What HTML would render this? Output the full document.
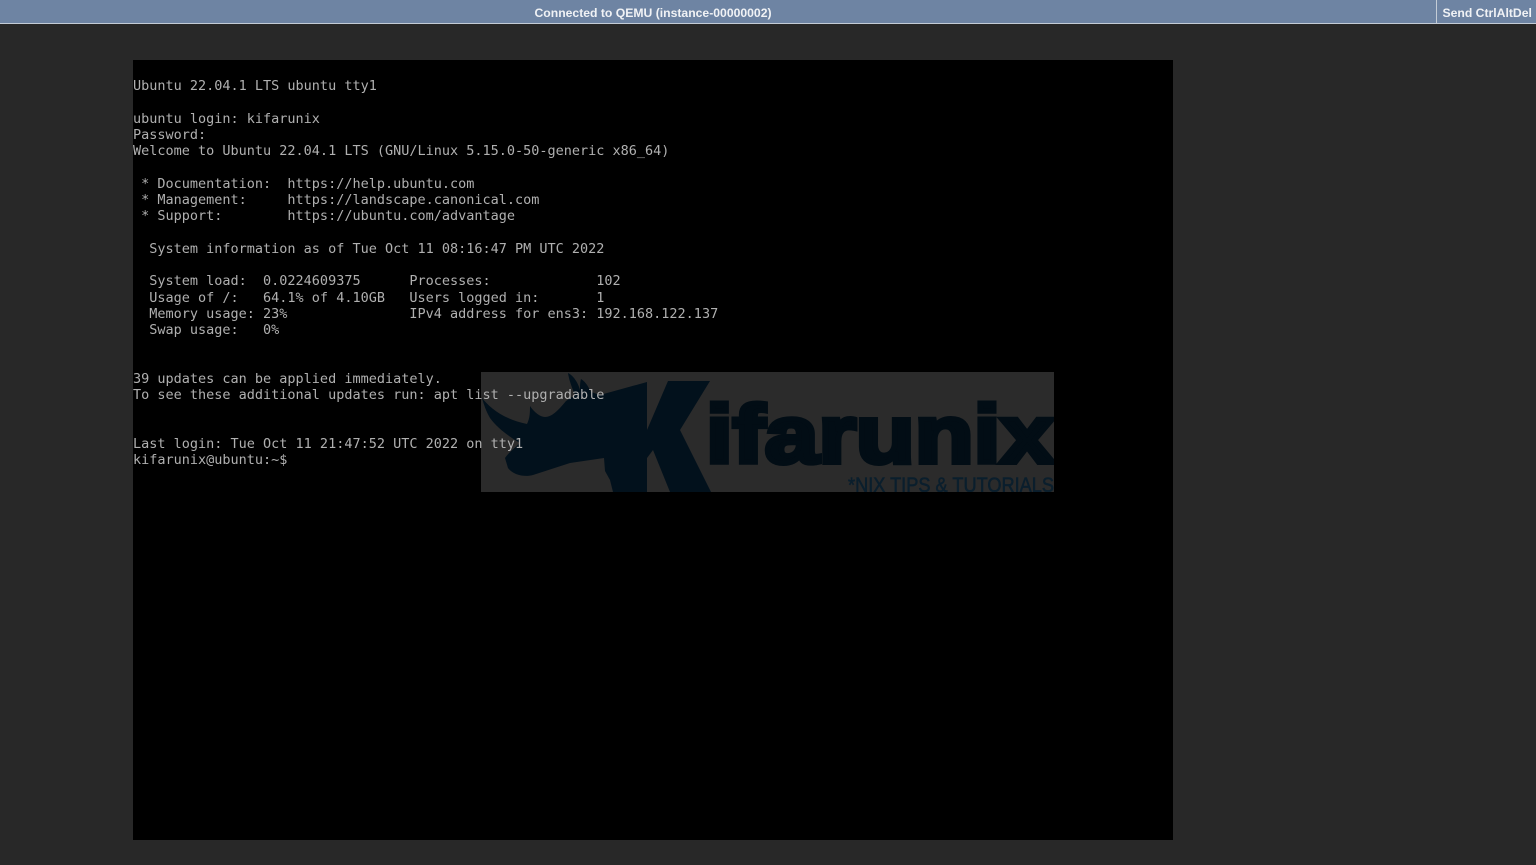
<!DOCTYPE html>
<html><head><meta charset="utf-8"><title>Console</title>
<style>
html,body{margin:0;padding:0;width:1536px;height:865px;overflow:hidden;background:#282828;}
#bar{position:absolute;left:0;top:0;width:1536px;height:23px;background:#6e84a3;border-bottom:1px solid #c4ccd6;}
#st{position:absolute;left:534.5px;top:6px;font:bold 12.2px/15px "Liberation Sans",sans-serif;color:#f0f2f5;white-space:nowrap;filter:blur(.25px);}
#btn{position:absolute;left:1436px;top:0;width:100px;height:23px;border-left:1px solid #c4ccd6;box-sizing:border-box;}
#btn span{position:absolute;left:5.5px;top:6px;font:bold 12.2px/15px "Liberation Sans",sans-serif;color:#f0f2f5;white-space:nowrap;filter:blur(.25px);}
#scr{position:absolute;left:133px;top:60px;width:1040px;height:780px;background:#000;overflow:hidden;}
#logo{position:absolute;left:0;top:0;}
#t{position:absolute;left:0;top:2px;width:1040px;height:500px;filter:blur(.3px);}
.l{position:absolute;left:0;height:16.25px;font:13.5px/16.25px "DejaVu Sans Mono","Liberation Mono",monospace;color:#b0b0b0;white-space:pre;}
</style></head><body>
<div id="bar"><div id="st">Connected to QEMU (instance-00000002)</div><div id="btn"><span>Send CtrlAltDel</span></div></div>
<div id="scr">
<svg id="logo" width="1040" height="780" viewBox="133 60 1040 780">
<defs><clipPath id="c"><rect x="481" y="372" width="573" height="120"/></clipPath></defs>
<rect x="481" y="372" width="573" height="120" fill="#2b2b2b"/>
<g clip-path="url(#c)">
<path fill="#02111c" d="M482 398C490 408 503 419 527 424C530 418 530 412 530 406C534 412 540 417 545 417C553 417 560 408 566 401L575 395C572 388 569 380 568 373C574 376 578 383 580 390C580 386 580 382 581 379C586 382 589 388 591 392L600 395L647 382V430L668 381H710L680 430L711 492H670L653 450L647 458V492H613L610 480L605 471L604 458L570 463L533 475C526 477 514 476 508 468L505 458C509 452 515 448 520 443C510 437 498 429 490 418C486 411 484 405 482 398Z"/>
<text x="706" y="462.5" font-family="Liberation Sans" font-weight="bold" font-size="82" textLength="348" lengthAdjust="spacingAndGlyphs" fill="#020d15" stroke="#020d15" stroke-width="5">ifarunix</text>
<text x="848" y="492" font-family="Liberation Sans" font-size="21" textLength="206" lengthAdjust="spacingAndGlyphs" fill="#0b1f2d" stroke="#0b1f2d" stroke-width=".6">*NIX TIPS &amp; TUTORIALS</text>
</g>
</svg>
<div id="t">
<div class="l" style="top:16.25px">Ubuntu 22.04.1 LTS ubuntu tty1</div>
<div class="l" style="top:48.75px">ubuntu login: kifarunix</div>
<div class="l" style="top:65px">Password:</div>
<div class="l" style="top:81.25px">Welcome to Ubuntu 22.04.1 LTS (GNU/Linux 5.15.0-50-generic x86_64)</div>
<div class="l" style="top:113.75px"> * Documentation:  https://help.ubuntu.com</div>
<div class="l" style="top:130px"> * Management:     https://landscape.canonical.com</div>
<div class="l" style="top:146.25px"> * Support:        https://ubuntu.com/advantage</div>
<div class="l" style="top:178.75px">  System information as of Tue Oct 11 08:16:47 PM UTC 2022</div>
<div class="l" style="top:211.25px">  System load:  0.0224609375      Processes:             102</div>
<div class="l" style="top:227.5px">  Usage of /:   64.1% of 4.10GB   Users logged in:       1</div>
<div class="l" style="top:243.75px">  Memory usage: 23%               IPv4 address for ens3: 192.168.122.137</div>
<div class="l" style="top:260px">  Swap usage:   0%</div>
<div class="l" style="top:308.75px">39 updates can be applied immediately.</div>
<div class="l" style="top:325px">To see these additional updates run: apt list --upgradable</div>
<div class="l" style="top:373.75px">Last login: Tue Oct 11 21:47:52 UTC 2022 on tty1</div>
<div class="l" style="top:390px">kifarunix@ubuntu:~$</div>
</div>
</div>
</body></html>
